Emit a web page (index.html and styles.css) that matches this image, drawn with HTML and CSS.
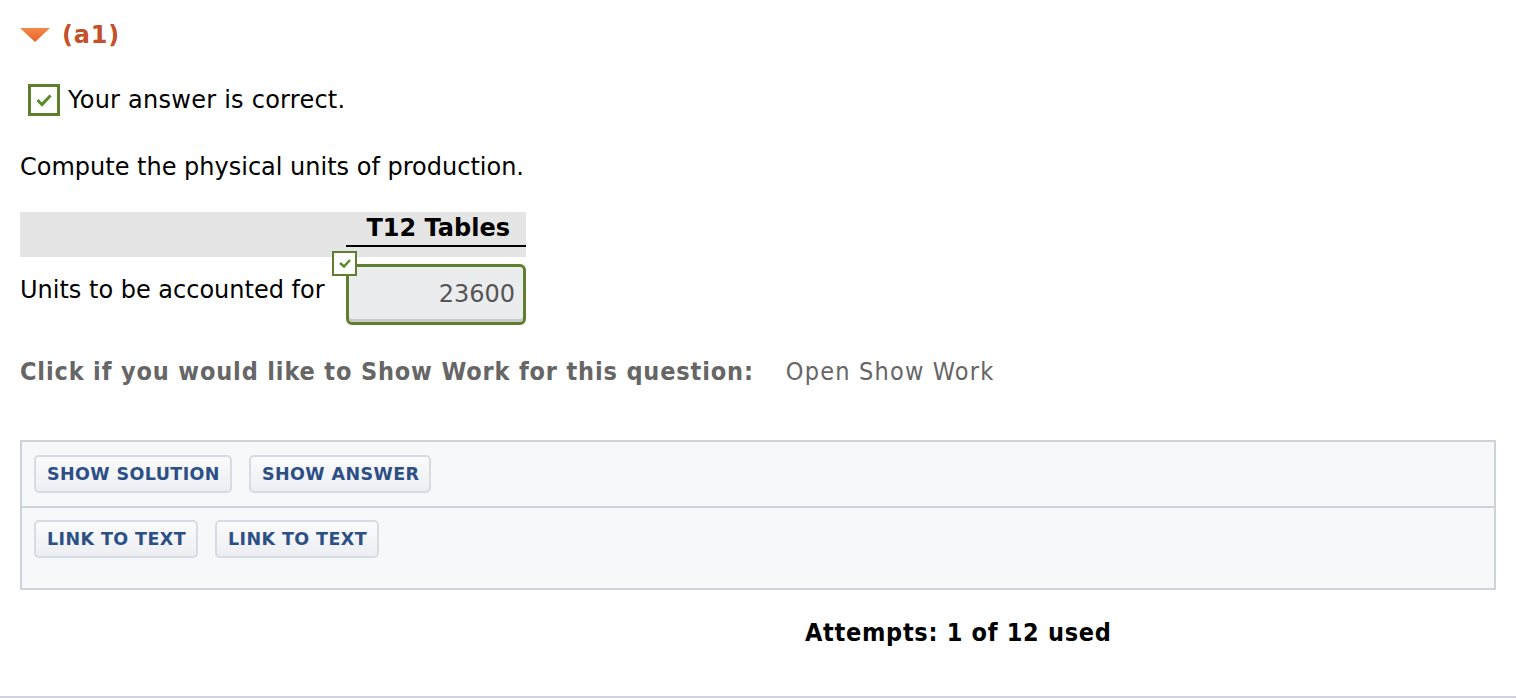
FILE: index.html
```html
<!DOCTYPE html>
<html>
<head>
<meta charset="utf-8">
<link rel="stylesheet" href="styles.css">
</head>
<body>
<div class="page">
  <div class="part-head">
    <svg class="tri" width="30" height="16" viewBox="0 0 30 16">
      <defs>
        <linearGradient id="g" x1="0" y1="0" x2="0" y2="1">
          <stop offset="0" stop-color="#f7884a"/>
          <stop offset="1" stop-color="#e8602a"/>
        </linearGradient>
      </defs>
      <polygon points="0,1 30,1 15,15" fill="url(#g)"/>
    </svg>
    <span class="part-label">(a1)</span>
  </div>

  <div class="result">
    <span class="check big">
      <svg width="18" height="14" viewBox="0 0 18 14"><polyline points="2.5,7 7,11.5 15.5,2.5" fill="none" stroke="#5a8a2a" stroke-width="3"/></svg>
    </span>
    <span class="result-text">Your answer is correct.</span>
  </div>

  <p class="question">Compute the physical units of production.</p>

  <div class="tbl">
    <div class="tbl-head">
      <div class="tbl-head-spacer"></div>
      <div class="tbl-head-cell">T12 Tables</div>
    </div>
    <div class="tbl-row">
      <div class="tbl-label">Units to be accounted for</div>
      <div class="tbl-input-wrap">
        <span class="check small">
          <svg width="14" height="11" viewBox="0 0 14 11"><polyline points="2,5 6,8.5 12,2" fill="none" stroke="#5a8a2a" stroke-width="2.4"/></svg>
        </span>
        <div class="tbl-input">23600</div>
      </div>
    </div>
  </div>

  <div class="showwork">
    <span class="sw-label">Click if you would like to Show Work for this question:</span>
    <span class="sw-link">Open Show Work</span>
  </div>

  <div class="panel">
    <div class="panel-row">
      <span class="btn">SHOW SOLUTION</span>
      <span class="btn">SHOW ANSWER</span>
    </div>
    <div class="panel-row last">
      <span class="btn">LINK TO TEXT</span>
      <span class="btn">LINK TO TEXT</span>
    </div>
  </div>

  <div class="attempts">Attempts: 1 of 12 used</div>
</div>
<div class="bottom-rule"></div>
</body>
</html>
```

FILE: styles.css
```css
html, body {
  margin: 0;
  padding: 0;
  background: #fff;
}
body {
  font-family: "DejaVu Sans", Verdana, sans-serif;
  color: #000;
  width: 1516px;
  height: 698px;
  overflow: hidden;
  position: relative;
}
.page {
  padding: 20px 20px 0 20px;
}
.part-head {
  display: flex;
  align-items: center;
  height: 30px;
}
.tri {
  display: block;
  margin-right: 12px;
}
.part-label {
  font-weight: bold;
  font-size: 24px;
  letter-spacing: 0.8px;
  color: #c4502a;
}
.result {
  display: flex;
  align-items: center;
  margin-top: 34px;
  margin-left: 8px;
}
.check {
  display: flex;
  align-items: center;
  justify-content: center;
  box-sizing: border-box;
  background: #fff;
}
.check.big {
  width: 32px;
  height: 32px;
  border: 3px solid #5f7f2e;
  margin-right: 8px;
}
.check.small {
  position: absolute;
  left: -14px;
  top: -13px;
  width: 25px;
  height: 25px;
  border: 2px solid #5f7f2e;
  z-index: 2;
}
.result-text {
  font-size: 24px;
  line-height: 32px;
  letter-spacing: 0.25px;
}
.question {
  font-size: 24px;
  margin: 37px 0 0 0;
  line-height: 28px;
}
.tbl {
  width: 506px;
  margin-top: 31px;
}
.tbl-head {
  display: flex;
  background: #e5e5e5;
  height: 45px;
  box-sizing: border-box;
  padding-bottom: 10px;
}
.tbl-head-spacer {
  flex: 1;
}
.tbl-head-cell {
  width: 180px;
  box-sizing: border-box;
  border-bottom: 2px solid #000;
  text-align: right;
  padding-right: 16px;
  font-weight: bold;
  font-size: 24px;
  line-height: 32px;
}
.tbl-row {
  display: flex;
  align-items: flex-start;
  padding-top: 7px;
}
.tbl-label {
  flex: 1;
  font-size: 24px;
  line-height: 30px;
  padding-top: 11px;
}
.tbl-input-wrap {
  position: relative;
  width: 180px;
}
.tbl-input {
  box-sizing: border-box;
  height: 61px;
  border: 3px solid #5f7f2e;
  border-radius: 6px;
  background: #ebecee;
  box-shadow: inset 0 -3px 0 #c9cbce;
  text-align: right;
  padding-right: 8px;
  font-size: 24px;
  line-height: 55px;
  color: #555;
}
.showwork {
  margin-top: 32px;
  display: flex;
  align-items: center;
  color: #666;
  font-size: 25px;
  line-height: 30px;
  font-stretch: condensed;
}
.sw-label {
  font-weight: bold;
  letter-spacing: 0.85px;
  margin-right: 32px;
}
.sw-link {
  color: #666;
  letter-spacing: 1.2px;
}
.panel {
  margin-top: 53px;
  border: 2px solid #cdd3dd;
  background: #f7f8fa;
  height: 150px;
  box-sizing: border-box;
}
.panel-row {
  display: flex;
  gap: 17px;
  padding: 13px 12px 13px 12px;
  border-bottom: 2px solid #cdd3dd;
}
.panel-row.last {
  border-bottom: none;
  padding-top: 12px;
}
.btn {
  display: inline-flex;
  align-items: center;
  height: 38px;
  box-sizing: border-box;
  padding: 0 10px 0 11px;
  border: 2px solid #d7dce4;
  border-radius: 5px;
  background: linear-gradient(#fbfbfc, #eceef2);
  color: #2c4f86;
  font-weight: bold;
  font-size: 17.5px;
  letter-spacing: 0.4px;
}
.attempts {
  margin-top: 28px;
  padding-left: 785px;
  font-weight: bold;
  font-size: 25px;
  line-height: 30px;
  letter-spacing: 0.7px;
  font-stretch: condensed;
}
.bottom-rule {
  position: absolute;
  left: 0;
  right: 0;
  bottom: 0;
  height: 2px;
  background: #cdd3dd;
}
```
